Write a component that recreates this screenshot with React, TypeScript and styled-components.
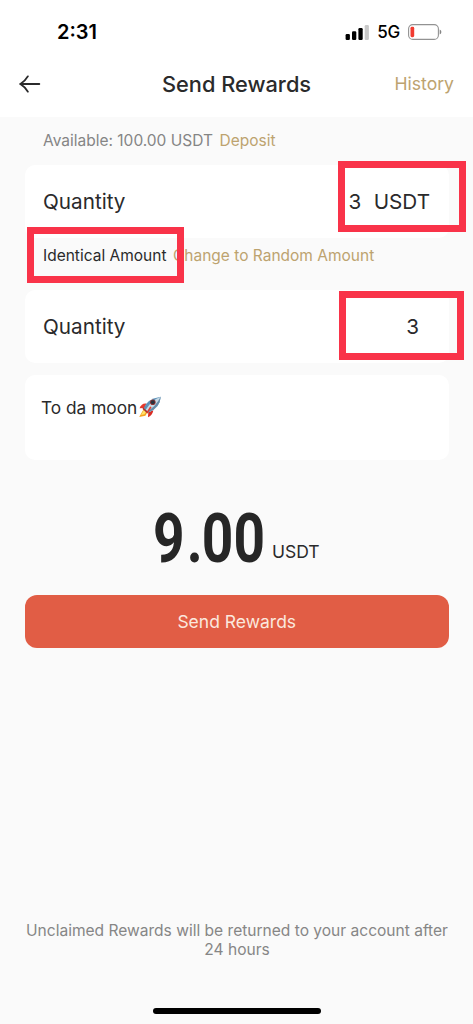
import React from 'react';
import styled, { createGlobalStyle } from 'styled-components';

const GlobalStyle = createGlobalStyle`
  * { box-sizing: border-box; }
  body { margin: 0; background: #fafafa; }
`;

const Screen = styled.div`
  position: relative;
  width: 473px;
  height: 1024px;
  display: flex;
  flex-direction: column;
  background: #fafafa;
  color: #2a2a2b;
  font-family: Inter, 'Liberation Sans', sans-serif;
  overflow: hidden;
`;

const Label = styled.span<{ $size: number; $color?: string; $weight?: number; $spacing?: number }>`
  font-size: ${p => p.$size}px;
  line-height: 1.2;
  font-weight: ${p => p.$weight ?? 400};
  color: ${p => p.$color ?? '#2a2a2b'};
  letter-spacing: ${p => p.$spacing ?? 0}px;
  white-space: pre;
`;

const StatusBar = styled.div`
  display: flex;
  align-items: center;
  justify-content: space-between;
  height: 50px;
  padding: 14px 31px 0 57px;
  background: #fff;
`;

const StatusIcons = styled.div`
  display: flex;
  align-items: center;
  gap: 8px;
`;

const Header = styled.header`
  display: grid;
  grid-template-columns: 100px 1fr 100px;
  align-items: center;
  height: 67px;
  padding: 0 19px;
  background: #fff;
  svg { display: block; }
`;

const Title = styled.h1`
  margin: 0;
  text-align: center;
  font-size: 21.8px;
  line-height: 26px;
  font-weight: 500;
  letter-spacing: 0;
`;

const HeaderAction = styled.div`
  text-align: right;
`;

const Content = styled.main`
  flex: 1;
  display: flex;
  flex-direction: column;
  padding: 0 24px 0 25px;
`;

const Line = styled.div<{ $height: number; $bottom?: number }>`
  display: flex;
  align-items: center;
  gap: 6.5px;
  height: ${p => p.$height}px;
  padding: 0 0 ${p => p.$bottom ?? 0}px 18px;
`;

const Card = styled.section`
  display: flex;
  align-items: center;
  justify-content: space-between;
  height: 73px;
  padding: 2px 18px 0;
  border-radius: 10px;
  background: #fff;
`;

const Amount = styled.div<{ $right: number }>`
  display: flex;
  gap: 12.5px;
  margin-right: ${p => p.$right}px;
`;

const Message = styled.section`
  display: flex;
  align-items: flex-start;
  height: 85px;
  margin-top: 12px;
  padding: 23px 16px;
  border-radius: 10px;
  background: #fff;
`;

const Total = styled.div`
  display: flex;
  align-items: flex-end;
  height: 109px;
  padding: 0 0 7px 128px;
`;

const TotalValue = styled.div`
  width: 119px;
  margin-bottom: -17px;
  font-family: Roboto, sans-serif;
  font-size: 68px;
  line-height: 80px;
  font-weight: 700;
  color: #262626;
  white-space: nowrap;
  transform: scaleX(0.81);
  transform-origin: left bottom;
`;

const Point = styled.span`
  margin: 0 -1px 0 2.5px;
`;

const SendButton = styled.button`
  height: 53px;
  margin: 26px 0 0 -0.5px;
  border: 0;
  border-radius: 12px;
  background: #e15d45;
  font-family: inherit;
`;

const Footer = styled.footer`
  display: flex;
  flex-direction: column;
  align-items: center;
  margin-top: auto;
`;

const Note = styled.p`
  margin: 0;
  text-align: center;
  font-size: 15.55px;
  line-height: 19px;
  color: #868686;
  white-space: pre;
`;

const HomeIndicator = styled.div`
  width: 168px;
  height: 6px;
  margin: 49px 0 10px;
  border-radius: 3px;
  background: #000;
`;

const Highlight = styled.div<{ $x: number; $y: number; $w: number; $h: number }>`
  position: absolute;
  left: ${p => p.$x}px;
  top: ${p => p.$y}px;
  width: ${p => p.$w}px;
  height: ${p => p.$h}px;
  border: 7px solid #f93349;
`;

const gold = '#bda36f';

const Signal = () => (
  <svg width="24" height="16" viewBox="0 0 24 16">
    <rect x="0.6" y="10" width="4.3" height="6" rx="1.2" />
    <rect x="7" y="7.3" width="4.3" height="8.7" rx="1.2" />
    <rect x="13.4" y="4" width="4.3" height="12" rx="1.2" />
    <rect x="19.7" y="1" width="4.2" height="15" rx="1.2" fill="#c9c9c9" />
  </svg>
);

const Battery = () => (
  <svg width="34" height="16" viewBox="0 0 34 16">
    <rect x="0.6" y="0.6" width="29.8" height="14.8" rx="4.2" fill="none" stroke="#929292" strokeWidth="1.1" />
    <rect x="2.5" y="2.8" width="3.7" height="10.4" rx="1.4" fill="#f13b30" />
    <path d="M31.7 5.6q1.7.7 1.7 2.4t-1.7 2.4z" fill="#858585" />
  </svg>
);

const BackArrow = () => (
  <svg width="22" height="18" viewBox="0 0 22 18" fill="none" stroke="#2a2a2b" strokeWidth="1.9" strokeLinecap="round">
    <path d="M20.3 9H1.8M8.8 1.4Q6.2 6 1.4 9Q6.2 12 8.8 16.6" />
  </svg>
);

const RocketBox = styled.svg`
  margin: -2px 0 0 1px;
`;

const Rocket = () => (
  <RocketBox width="24" height="22" viewBox="0 0 24 22">
    <path d="M6.3 12.1L1.2 21l6.2-1.2 2.8-4.9z" fill="#f7a51e" />
    <path d="M5.9 14L3 19.1l3.5-.9 2-3.3z" fill="#ffe36c" />
    <path d="M8.3 7.5Q3.8 6.7 1.5 12.2l5.4-.2z" fill="#e4392c" />
    <path d="M15.3 14.2Q15 18.8 10 21.3l.3-5.1z" fill="#d92d25" />
    <path d="M5.6 12.3Q9.6 2.7 22.7.8 22.1 12 10.2 16.6z" fill="#5c91b8" />
    <path d="M7.7 13.8Q13.5 4.2 22.7.8 22.1 12 10.2 16.6z" fill="#c6d9e5" />
    <path d="M9 15.4Q17.6 11 22.7.8 22.1 12 10.2 16.6z" fill="#668ca9" />
    <circle cx="14.8" cy="6.2" r="2.8" fill="#8e3030" />
    <circle cx="14.8" cy="6.2" r="1.9" fill="#26323e" />
    <path d="M5.2 11.6l5.4 4.8-1.1 1.1-5-4.5z" fill="#a82e2e" />
    <path d="M12.1 10.6l-3.7 6 1.3.3 3.9-5.6z" fill="#e6392c" />
  </RocketBox>
);

export default function App() {
  return (
    <Screen>
      <GlobalStyle />
      <StatusBar>
        <Label $size={20} $weight={600} $color="#000">2:31</Label>
        <StatusIcons>
          <Signal />
          <Label $size={17} $weight={500} $color="#000" $spacing={-0.2}>5G</Label>
          <Battery />
        </StatusIcons>
      </StatusBar>
      <Header>
        <BackArrow />
        <Title>Send Rewards</Title>
        <HeaderAction><Label $size={17.6} $color={gold}>History</Label></HeaderAction>
      </Header>
      <Content>
        <Line $height={48}>
          <Label $size={15.5} $color="#858585">Available: 100.00 USDT</Label>
          <Label $size={15.5} $color={gold}>Deposit</Label>
        </Line>
        <Card>
          <Label $size={20.7}>Quantity</Label>
          <Amount $right={1}>
            <Label $size={20.7}>3</Label>
            <Label $size={20.7}>USDT</Label>
          </Amount>
        </Card>
        <Line $height={52} $bottom={16}>
          <Label $size={15.5}>Identical Amount</Label>
          <Label $size={15.5} $color={gold}>Change to Random Amount</Label>
        </Line>
        <Card>
          <Label $size={20.7}>Quantity</Label>
          <Amount $right={12}><Label $size={20.7}>3</Label></Amount>
        </Card>
        <Message>
          <Label $size={17.3}>To da moon</Label>
          <Rocket />
        </Message>
        <Total>
          <TotalValue>9<Point>.</Point>00</TotalValue>
          <Label $size={17.5}>USDT</Label>
        </Total>
        <SendButton><Label $size={17.5} $color="#fbe8de">Send Rewards</Label></SendButton>
        <Footer>
          <Note>{'Unclaimed Rewards will be returned to your account after\n24 hours'}</Note>
          <HomeIndicator />
        </Footer>
      </Content>
      <Highlight $x={338} $y={161} $w={128} $h={71} />
      <Highlight $x={27} $y={227} $w={157} $h={56} />
      <Highlight $x={339} $y={291} $w={125} $h={69} />
    </Screen>
  );
}
